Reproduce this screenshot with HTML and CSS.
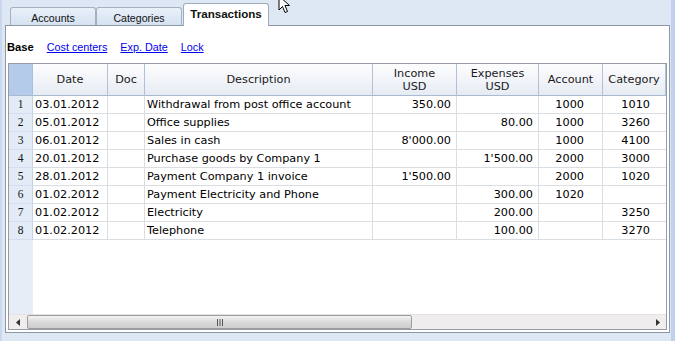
FILE: index.html
```html
<!DOCTYPE html>
<html>
<head>
<meta charset="utf-8">
<link rel="stylesheet" href="styles.css">
</head>
<body>
<div class="app">
  <div class="edge-left"></div>
  <div class="main">
    <div class="tabbar">
      <div class="tab">Accounts</div>
      <div class="tab">Categories</div>
      <div class="tab active">Transactions</div>
    </div>
    <div class="panel">
      <div class="links">
        <span class="base">Base</span>
        <a class="link">Cost centers</a>
        <a class="link">Exp. Date</a>
        <a class="link">Lock</a>
      </div>
      <div class="table">
        <div class="row head">
          <div class="c corner"></div>
          <div class="c">Date</div>
          <div class="c">Doc</div>
          <div class="c">Description</div>
          <div class="c two">Income<br>USD</div>
          <div class="c two">Expenses<br>USD</div>
          <div class="c">Account</div>
          <div class="c">Category</div>
        </div>
        <div class="row"><div class="c num">1</div><div class="c date">03.01.2012</div><div class="c"></div><div class="c desc">Withdrawal from post office account</div><div class="c amt">350.00</div><div class="c amt"></div><div class="c acc">1000</div><div class="c cat">1010</div></div>
        <div class="row"><div class="c num">2</div><div class="c date">05.01.2012</div><div class="c"></div><div class="c desc">Office supplies</div><div class="c amt"></div><div class="c amt">80.00</div><div class="c acc">1000</div><div class="c cat">3260</div></div>
        <div class="row"><div class="c num">3</div><div class="c date">06.01.2012</div><div class="c"></div><div class="c desc">Sales in cash</div><div class="c amt">8'000.00</div><div class="c amt"></div><div class="c acc">1000</div><div class="c cat">4100</div></div>
        <div class="row"><div class="c num">4</div><div class="c date">20.01.2012</div><div class="c"></div><div class="c desc">Purchase goods by Company 1</div><div class="c amt"></div><div class="c amt">1'500.00</div><div class="c acc">2000</div><div class="c cat">3000</div></div>
        <div class="row"><div class="c num">5</div><div class="c date">28.01.2012</div><div class="c"></div><div class="c desc">Payment Company 1 invoice</div><div class="c amt">1'500.00</div><div class="c amt"></div><div class="c acc">2000</div><div class="c cat">1020</div></div>
        <div class="row"><div class="c num">6</div><div class="c date">01.02.2012</div><div class="c"></div><div class="c desc">Payment Electricity and Phone</div><div class="c amt"></div><div class="c amt">300.00</div><div class="c acc">1020</div><div class="c cat"></div></div>
        <div class="row"><div class="c num">7</div><div class="c date">01.02.2012</div><div class="c"></div><div class="c desc">Electricity</div><div class="c amt"></div><div class="c amt">200.00</div><div class="c acc"></div><div class="c cat">3250</div></div>
        <div class="row"><div class="c num">8</div><div class="c date">01.02.2012</div><div class="c"></div><div class="c desc">Telephone</div><div class="c amt"></div><div class="c amt">100.00</div><div class="c acc"></div><div class="c cat">3270</div></div>
        <div class="filler"><div class="filler-num"></div><div class="filler-rest"></div></div>
        <div class="hscroll">
          <div class="sbtn"><svg width="5" height="7" viewBox="0 0 5 7"><path d="M4 0 L0 3.5 L4 7 Z" fill="#333"/></svg></div>
          <div class="thumb"><svg width="8" height="7" viewBox="0 0 8 7"><path d="M1.5 0 V7 M4 0 V7 M6.5 0 V7" stroke="#555" stroke-width="1"/></svg></div>
          <div class="track"></div>
          <div class="sbtn"><svg width="5" height="7" viewBox="0 0 5 7"><path d="M1 0 L5 3.5 L1 7 Z" fill="#333"/></svg></div>
        </div>
      </div>
    </div>
  </div>
  <div class="edge-right"></div>
  <svg class="cursor" width="14" height="20" viewBox="0 0 14 20"><path d="M1 1 L1 15 L4.5 11.5 L7 17.5 L9.5 16.5 L7 10.5 L11.5 10.5 Z" fill="#fff" stroke="#000" stroke-width="1" stroke-linejoin="miter"/></svg>
</div>
</body>
</html>
```
FILE: styles.css
```css
* { box-sizing: border-box; }
html, body { margin: 0; padding: 0; }
body { width: 675px; height: 341px; overflow: hidden; background: #dee8f5; }
.app {
  position: relative;
  width: 675px; height: 341px;
  display: flex;
  background: #dee8f5;
  font-family: "DejaVu Sans", sans-serif;
}
.edge-left { width: 2px; background: #c8d9ef; }
.edge-right { width: 4px; background: #bfd2ed; margin-left: auto; }
.main { width: 669px; padding-left: 3px; }
.tabbar {
  height: 25px;
  display: flex;
  align-items: flex-end;
  padding-left: 5px;
  position: relative;
  z-index: 2;
}
.tab {
  height: 18px;
  width: 86px;
  border: 1px solid #a3b0c2;
  border-bottom: none;
  border-radius: 3px 3px 0 0;
  background: linear-gradient(#e9f0f9, #d5e2f2);
  font-family: "Liberation Sans", sans-serif;
  font-size: 10.6px;
  color: #111;
  display: flex;
  align-items: center;
  justify-content: center;
  padding-top: 2px;
}
.tab.active {
  height: 23px;
  width: 86px;
  margin-left: 1px;
  margin-bottom: -1px;
  background: #fff;
  border-color: #9eabbd;
  font-weight: bold;
  font-size: 11.6px;
  padding-top: 0;
  padding-bottom: 3px;
}
.panel {
  width: 665px;
  height: 308px;
  border: 1px solid #8e98a5;
  background: #fff;
  padding: 0 2px 2px 0;
  display: flex;
  flex-direction: column;
}
.links {
  height: 37px;
  padding-top: 15px;
  padding-left: 1px;
  font-family: "Liberation Sans", sans-serif;
  font-size: 10.8px;
  line-height: 13px;
  display: flex;
  gap: 13px;
}
.base { font-weight: bold; font-size: 11.2px; color: #000; }
.link { color: #0000ee; text-decoration: underline; }
.table {
  flex: 1;
  margin-left: 2px;
  border: 1px solid #979ca4;
  display: flex;
  flex-direction: column;
  font-size: 11.25px;
  color: #000;
}
.row {
  display: grid;
  grid-template-columns: 24px 75px 37px 228px 84px 82px 64px 63px;
  height: 18px;
}
.row .c {
  border-right: 1px solid #dadde2;
  border-bottom: 1px solid #dadde2;
  white-space: nowrap;
  overflow: hidden;
  line-height: 17px;
}
.row .c:last-child { border-right: none; }
.row.head { height: 32px; }
.row.head .c {
  background: linear-gradient(#fdfdfe, #e6ebf3);
  border-right: 1px solid #b1c1d7;
  border-bottom: 1px solid #a9b9cf;
  display: flex;
  align-items: center;
  justify-content: center;
  text-align: center;
  line-height: 13px;
  color: #1a1a1a;
  padding-bottom: 1px;
}
.row.head .c.two { padding-top: 1px; }
.row.head .c.corner { background: #b5cbea; border-right-color: #a9bfdf; }
.row .c.num {
  background: #e3ebf6;
  border-right: 1px solid #c3d3e8;
  border-bottom: 1px solid #d2deee;
  font-family: "Liberation Serif", serif;
  font-size: 11.5px;
  text-align: center;
  color: #111;
}
.date { padding-left: 2px; }
.desc { padding-left: 2px; }
.amt { text-align: right; padding-right: 5px; }
.acc { text-align: right; padding-right: 18px; }
.cat { text-align: right; padding-right: 16px; }
.filler { flex: 1; display: flex; }
.filler-num { width: 24px; background: #e6edf7; }
.filler-rest { flex: 1; background: #fff; }
.hscroll {
  height: 15px;
  display: flex;
  background: #efeded;
  border-top: 1px solid #e4e2e2;
}
.sbtn {
  width: 18px;
  display: flex;
  align-items: center;
  justify-content: center;
}
.thumb {
  width: 385px;
  border: 1px solid #9d9d9d;
  border-radius: 2px;
  background: linear-gradient(#f3f3f3, #dadada 50%, #cdcdcd);
  display: flex;
  align-items: center;
  justify-content: center;
}
.track { flex: 1; }
.cursor { position: absolute; left: 278px; top: -5px; }
```
